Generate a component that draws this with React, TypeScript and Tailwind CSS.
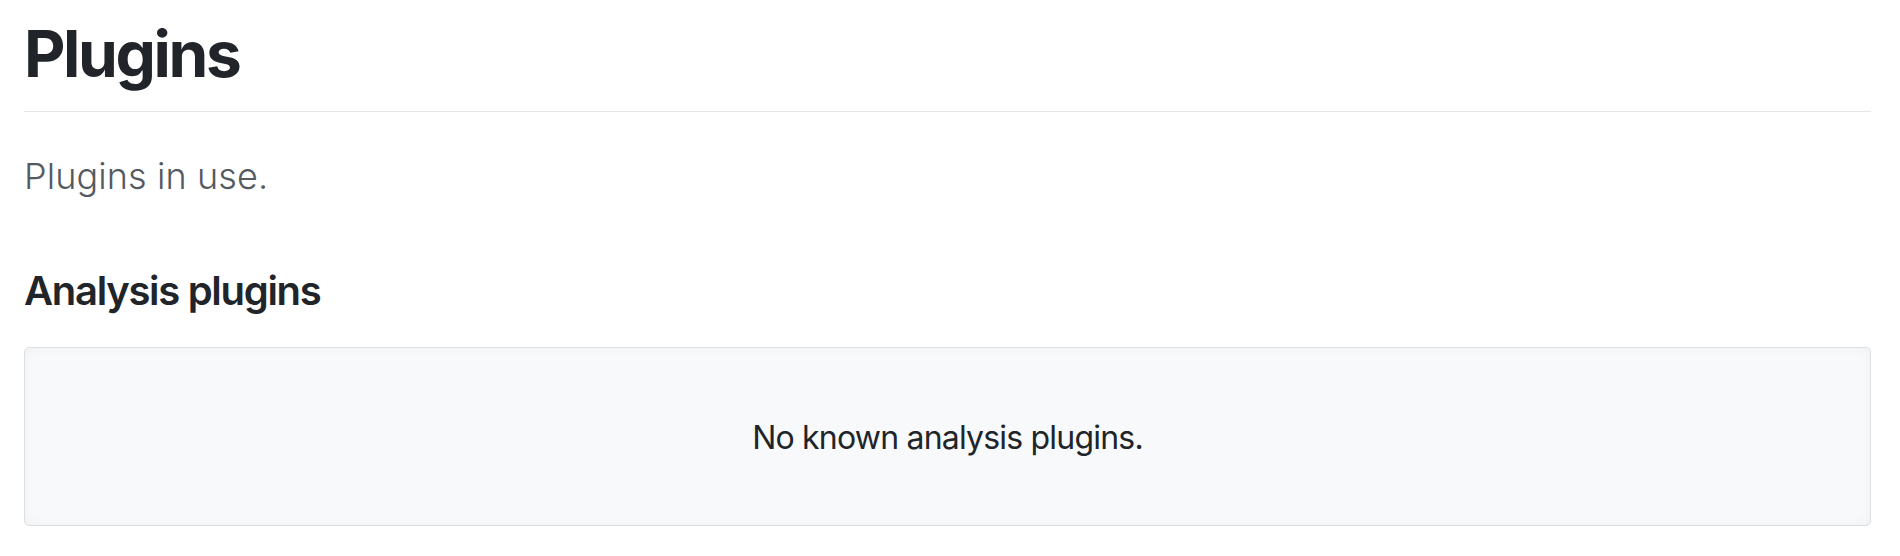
import React from 'react';

const App: React.FC = () => {
  return (
    <div className="min-h-[556px] bg-white pl-6 pr-[29px] font-['Inter',_'Liberation_Sans',_sans-serif] text-[#212529]">
      <h1 className="mt-[15px] border-b border-[#e5e7ea] pb-[19px] text-[64px] font-bold leading-[77px] tracking-[-2.4px]">
        Plugins
      </h1>
      <p className="mt-[37px] text-[36px] font-light leading-[54px] tracking-[0.1px] text-[#555a60]">Plugins in use.</p>

      <h2 className="mt-[64px] text-[40px] font-semibold leading-[48px] tracking-[-1.3px]">Analysis plugins</h2>

      <div className="mt-[32px] flex h-[179px] items-center justify-center rounded-[5px] border border-[#dcdfe3] bg-[#f8f9fb] pt-[2px] shadow-[inset_0_0_12px_rgba(0,0,0,0.04)]">
        <span className="text-[32px] leading-[48px] tracking-[-0.8px]">No known analysis plugins.</span>
      </div>
    </div>
  );
};

export default App;
